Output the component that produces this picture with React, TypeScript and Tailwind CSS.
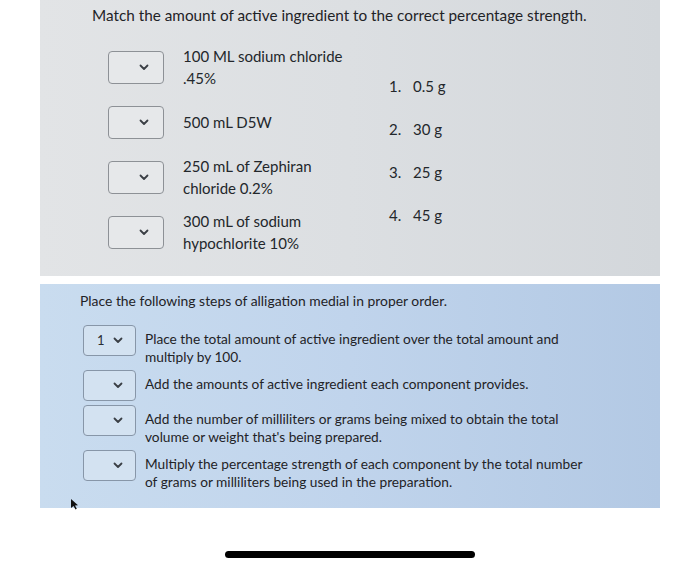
import React from "react";

const Chevron = () => (
  <svg width="10" height="7" viewBox="0 0 10 7" fill="none">
    <path d="M1.5 1.5 L5 5 L8.5 1.5" stroke="#3a3f45" strokeWidth="1.8" strokeLinecap="round" strokeLinejoin="round" />
  </svg>
);

const TopSelect = () => (
  <div className="w-[56px] h-[33px] shrink-0 rounded-[4px] border border-[#8d9196] bg-[#e6e8ea] flex items-center justify-end pr-[14px]">
    <Chevron />
  </div>
);

const BottomSelect = ({ value }: { value?: string }) => (
  <div className="w-[53px] h-[31px] shrink-0 rounded-[4px] border border-[#8796a8] bg-[#d3e2f1] flex items-center pl-[13px] pr-[12px]">
    <span className="flex-1 text-[13px] text-[#2a2e33]">{value ?? ""}</span>
    <Chevron />
  </div>
);

const topRows = [
  ["100 ML sodium chloride", ".45%"],
  ["500 mL D5W"],
  ["250 mL of Zephiran", "chloride 0.2%"],
  ["300 mL of sodium", "hypochlorite 10%"],
];

const answers = [
  ["1.", "0.5 g"],
  ["2.", "30 g"],
  ["3.", "25 g"],
  ["4.", "45 g"],
];

const steps: { v?: string; lines: string[] }[] = [
  { v: "1", lines: ["Place the total amount of active ingredient over the total amount and", "multiply by 100."] },
  { lines: ["Add the amounts of active ingredient each component provides."] },
  { lines: ["Add the number of milliliters or grams being mixed to obtain the total", "volume or weight that's being prepared."] },
  { lines: ["Multiply the percentage strength of each component by the total number", "of grams or milliliters being used in the preparation."] },
];

export default function App() {
  return (
    <div
      className="w-[700px] h-[572px] bg-white text-[#23272b] overflow-hidden relative"
      style={{ fontFamily: "Lato, 'Open Sans', sans-serif" }}
    >
      {/* Top panel */}
      <div className="ml-[40px] w-[620px] h-[276px] bg-gradient-to-r from-[#e2e4e6] via-[#dcdfe2] to-[#d3d7db] pt-[3px]">
        <div className="pl-[52px] text-[15.3px] leading-[24px] text-[#1f2327]">
          Match the amount of active ingredient to the correct percentage strength.
        </div>
        <div className="flex mt-[13px]">
          <div className="flex flex-col pl-[68px] w-[349px]">
            {topRows.map((lines, i) => (
              <div key={i} className="h-[55px] flex items-center gap-[19px]">
                <TopSelect />
                <div className="text-[15px] leading-[22px] mt-[-2px]">
                  {lines.map((l, j) => (
                    <div key={j}>{l}</div>
                  ))}
                </div>
              </div>
            ))}
          </div>
          <div className="flex flex-col pt-[35px]">
            {answers.map(([n, v], i) => (
              <div key={i} className="h-[43px] flex text-[15px] leading-[22px]">
                <span className="w-[24px]">{n}</span>
                <span>{v}</span>
              </div>
            ))}
          </div>
        </div>
      </div>

      {/* Bottom panel */}
      <div className="ml-[40px] mt-[8px] w-[620px] h-[224px] bg-gradient-to-r from-[#c9dcef] via-[#c0d4ec] to-[#b3c9e4] pt-[7px]">
        <div className="pl-[40px] text-[13.9px] leading-[20px] text-[#1f2327]">
          Place the following steps of alligation medial in proper order.
        </div>
        <div className="flex flex-col gap-[4px] pl-[43px] mt-[14px]">
          {steps.map((s, i) => (
            <div key={i} className="flex items-start gap-[9px]">
              <BottomSelect value={s.v} />
              <div className="mt-[5px] text-[13.7px] leading-[18px] text-[#1f2327] whitespace-nowrap">
                {s.lines.map((l, j) => (
                  <div key={j}>{l}</div>
                ))}
              </div>
            </div>
          ))}
        </div>
      </div>

      {/* cursor */}
      <svg className="absolute left-[71px] top-[499px]" width="8" height="11" viewBox="0 0 8 11">
        <path d="M0 0 L0 9 L2.5 7 L4.5 10.5 L5.8 9.8 L4 6.5 L7 6.3 Z" fill="#111" />
      </svg>

      {/* home indicator */}
      <div className="absolute left-[225px] top-[551px] w-[250px] h-[7px] rounded-full bg-black" />
    </div>
  );
}
